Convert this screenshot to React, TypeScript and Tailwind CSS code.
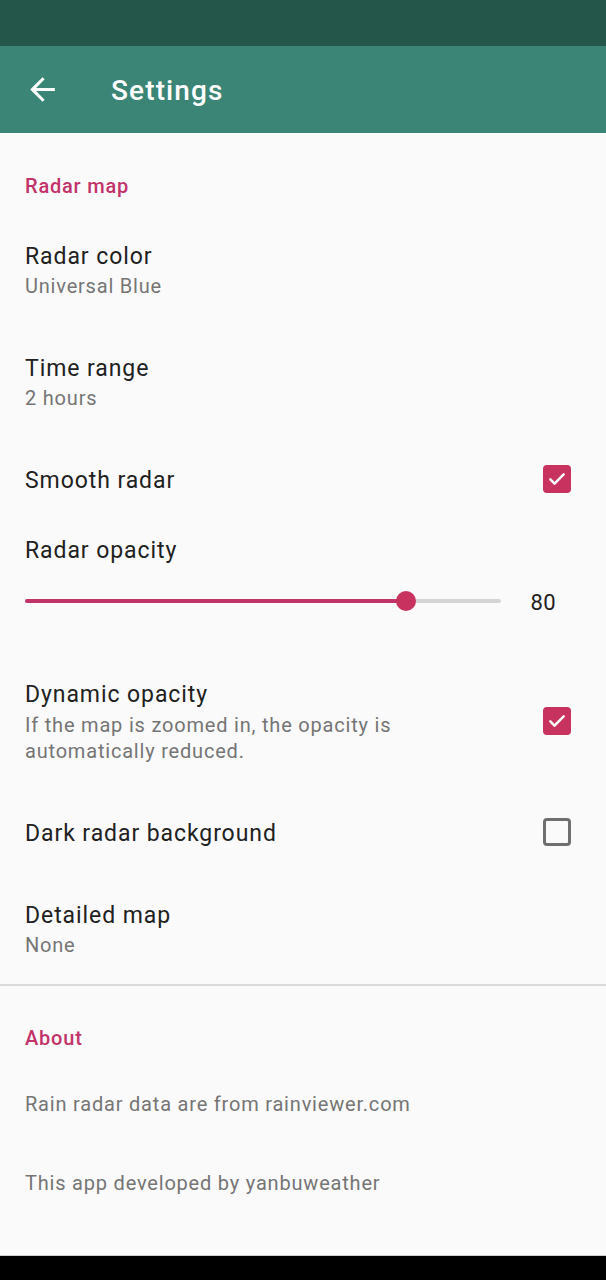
import React from 'react';

const ACCENT = 'text-[#c2336a]';

const Category = ({ title, className = '' }: { title: string; className?: string }) => (
  <div className={`px-[25px] ${className}`}>
    <p className={`text-[20px] leading-[26px] font-medium tracking-[0.04em] ${ACCENT}`}>{title}</p>
  </div>
);

const Checkbox = ({ checked }: { checked: boolean }) =>
  checked ? (
    <div className="w-[28px] h-[28px] rounded-[4px] bg-[#c8325f] flex items-center justify-center shrink-0">
      <svg width="20" height="20" viewBox="0 0 24 24" fill="none">
        <path d="M4 12.5l5 5L20 6.5" stroke="white" strokeWidth="3" strokeLinecap="round" strokeLinejoin="round" />
      </svg>
    </div>
  ) : (
    <div className="w-[28px] h-[28px] rounded-[4px] border-[3px] border-[#6f6f6f] shrink-0" />
  );

const Title = ({ children }: { children: React.ReactNode }) => (
  <p className="text-[23px] leading-[28px] tracking-[0.04em] text-[#212121]">{children}</p>
);

const Summary = ({ children, className = '' }: { children: React.ReactNode; className?: string }) => (
  <p className={`text-[20px] leading-[26px] tracking-[0.04em] text-[#757575] ${className}`}>{children}</p>
);

const TwoLine = ({ title, summary, className }: { title: string; summary: string; className: string }) => (
  <div className={`px-[25px] ${className}`}>
    <Title>{title}</Title>
    <Summary className="mt-[2px]">{summary}</Summary>
  </div>
);

const CheckRow = ({ title, checked, className }: { title: string; checked: boolean; className: string }) => (
  <div className={`pl-[25px] pr-[35px] flex items-center justify-between ${className}`}>
    <div className="pt-[4px]">
      <Title>{title}</Title>
    </div>
    <Checkbox checked={checked} />
  </div>
);

const OpacitySlider = ({ value }: { value: number }) => (
  <div className="mt-[16px] h-[40px] pl-[25px] pr-[50px] flex items-center">
    <div className="relative w-[476px] h-[4px] rounded-full bg-[#d4d4d4]">
      <div className="absolute left-0 top-0 h-[4px] rounded-full bg-[#c2336a]" style={{ width: `${value}%` }} />
      <div
        className="absolute top-1/2 w-[20px] h-[20px] -mt-[10px] -ml-[10px] rounded-full bg-[#c8325f]"
        style={{ left: `${value}%` }}
      />
    </div>
    <span className="ml-auto pt-[3px] text-[22px] leading-[28px] text-[#212121] tracking-[0.02em]">{value}</span>
  </div>
);

export default function App() {
  return (
    <div
      className="w-[606px] h-[1280px] flex flex-col bg-[#fafafa]"
      style={{ fontFamily: 'Roboto, "Noto Sans", sans-serif' }}
    >
      {/* status bar */}
      <div className="h-[46px] bg-[#24574a] shrink-0" />

      {/* toolbar */}
      <div className="h-[87px] bg-[#3a8575] flex items-center shrink-0">
        <div className="w-[37px] h-[37px] ml-[24px] flex items-center justify-center">
          <svg width="37" height="37" viewBox="0 0 24 24" fill="white">
            <path d="M20 11H7.83l5.59-5.59L12 4l-8 8 8 8 1.41-1.41L7.83 13H20v-2z" />
          </svg>
        </div>
        <h1 className="ml-[50px] pt-[2px] text-[28px] leading-[34px] font-medium text-white tracking-[0.04em]">
          Settings
        </h1>
      </div>

      <div className="flex-1 flex flex-col">
        <Category title="Radar map" className="h-[78px] pt-[40px]" />
        <TwoLine title="Radar color" summary="Universal Blue" className="h-[112px] pt-[32px]" />
        <TwoLine title="Time range" summary="2 hours" className="h-[112px] pt-[32px]" />
        <CheckRow title="Smooth radar" checked className="h-[88px]" />

        <div className="h-[133px] pt-[14px]">
          <div className="px-[25px]">
            <Title>Radar opacity</Title>
          </div>
          <OpacitySlider value={80} />
        </div>

        <div className="h-[132px] pl-[25px] pr-[35px] pt-[1px] flex items-center justify-between">
          <div className="w-[440px]">
            <Title>Dynamic opacity</Title>
            <Summary className="mt-[3px]">If the map is zoomed in, the opacity is automatically reduced.</Summary>
          </div>
          <div className="-mt-[4px]">
            <Checkbox checked />
          </div>
        </div>

        <CheckRow title="Dark radar background" checked={false} className="h-[88px]" />
        <TwoLine title="Detailed map" summary="None" className="h-[108px] pt-[26px]" />

        <div className="h-[2px] bg-[#dadada]" />

        <Category title="About" className="h-[76px] pt-[39px]" />
        <div className="h-[80px] px-[25px] pt-[4px] flex items-center">
          <Summary>Rain radar data are from rainviewer.com</Summary>
        </div>
        <div className="h-[78px] px-[25px] pt-[4px] flex items-center">
          <Summary>This app developed by yanbuweather</Summary>
        </div>
      </div>

      {/* navigation bar */}
      <div className="h-[25px] bg-black border-t border-[#cfcfcf] shrink-0" />
    </div>
  );
}
